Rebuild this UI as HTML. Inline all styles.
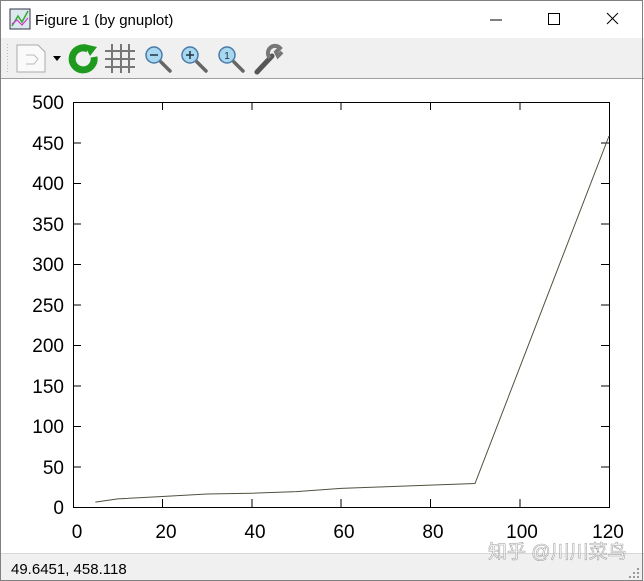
<!DOCTYPE html>
<html><head><style>
body{margin:0;width:644px;height:581px;overflow:hidden;background:#fff;font-family:"Liberation Sans","Noto Sans CJK SC",sans-serif;}
</style></head><body>
<svg width="644" height="581" xmlns="http://www.w3.org/2000/svg" style="display:block">
<rect x="0" y="0" width="644" height="581" fill="#fff"/>
<rect x="0" y="38" width="644" height="40" fill="#f0f0f0"/>
<line x1="0" y1="78.5" x2="644" y2="78.5" stroke="#a0a0a0"/>
<rect x="0" y="553" width="644" height="28" fill="#f0f0f0"/>
<line x1="0" y1="553.5" x2="644" y2="553.5" stroke="#d8d8d8"/>
<rect x="0.5" y="0.5" width="642" height="580" fill="none" stroke="#808080"/>
<!-- title -->
<rect x="10" y="9" width="20" height="20" fill="#dde8ee" stroke="#334"/>
<path d="M12 26 L18 16 L22 22 L28 11" stroke="#3a3" fill="none" stroke-width="1.5"/>
<path d="M12 24 L17 20 L22 25 L28 18" stroke="#c3c" fill="none" stroke-width="1.2"/>
<text x="35" y="25" font-size="15" fill="#000">Figure 1 (by gnuplot)</text>
<line x1="490" y1="20" x2="502" y2="20" stroke="#000"/>
<rect x="548.5" y="13.5" width="11" height="11" fill="none" stroke="#000"/>
<path d="M607 13 L618 24 M618 13 L607 24" stroke="#000"/>
<!-- toolbar -->
<line x1="7.5" y1="44" x2="7.5" y2="72" stroke="#bbb" stroke-dasharray="1,2"/>
<path d="M17 45 H38 L45 52 V72 H17 Z" fill="#fafafa" stroke="#aaa"/>
<path d="M26 55 H34 L38 59 L34 64 H26" fill="none" stroke="#bbb"/>
<path d="M53 56 H61 L57 61 Z" fill="#000"/>
<path d="M94 57 A11 11 0 1 1 88 49" fill="none" stroke="#1e9a1e" stroke-width="7"/>
<path d="M84 44 L97 47 L90 56 Z" fill="#1e9a1e"/>
<g stroke="#777" stroke-width="2"><line x1="112" y1="44" x2="112" y2="73"/><line x1="121" y1="44" x2="121" y2="73"/><line x1="129" y1="44" x2="129" y2="73"/><line x1="105" y1="51" x2="135" y2="51"/><line x1="105" y1="59" x2="135" y2="59"/><line x1="105" y1="67" x2="135" y2="67"/></g>
<g stroke="#666" stroke-width="3.5" stroke-linecap="round"><line x1="161" y1="62" x2="170" y2="71"/><line x1="197" y1="62" x2="206" y2="71"/><line x1="234" y1="62" x2="243" y2="71"/></g>
<g fill="#a8d8f0" stroke="#4a7aa8" stroke-width="1.5"><circle cx="154" cy="55" r="8"/><circle cx="190" cy="55" r="8"/><circle cx="227" cy="55" r="8"/></g>
<g stroke="#234" stroke-width="1.5"><line x1="150" y1="55" x2="158" y2="55"/><line x1="186" y1="55" x2="194" y2="55"/><line x1="190" y1="51" x2="190" y2="59"/></g>
<text x="227" y="59" font-size="10" text-anchor="middle" fill="#234">1</text>
<path d="M257 72 L272 56" stroke="#555" stroke-width="5" stroke-linecap="round"/>
<path d="M270 58 A7 7 0 1 1 280 48 L276 52 L278 56 L282 52" fill="none" stroke="#777" stroke-width="4"/>
<!-- plot -->
<g stroke="#000" stroke-width="1" fill="none">
<rect x="73.5" y="102.5" width="536" height="405"/>
<path d="M73 143h8M73 183.5h8M73 224h8M73 264.5h8M73 305h8M73 345.5h8M73 386h8M73 426.5h8M73 467h8
M609 143h-8M609 183.5h-8M609 224h-8M609 264.5h-8M609 305h-8M609 345.5h-8M609 386h-8M609 426.5h-8M609 467h-8
M162.5 507v-8M252 507v-8M341 507v-8M430.5 507v-8M520 507v-8
M162.5 102v8M252 102v8M341 102v8M430.5 102v8M520 102v8"/>
</g>
<polyline fill="none" stroke="#505040" stroke-width="1" points="95.3,502.1 117.7,498.9 162.3,496.5 207,494 251.7,493.2 296.3,491.6 341,488.4 385.7,486.8 430.3,485.1 475,483.5 609,136"/>
<g font-size="19" fill="#000" text-anchor="end">
<text x="64" y="109">500</text><text x="64" y="150">450</text><text x="64" y="190">400</text><text x="64" y="231">350</text><text x="64" y="271">300</text><text x="64" y="312">250</text><text x="64" y="352">200</text><text x="64" y="393">150</text><text x="64" y="433">100</text><text x="64" y="474">50</text><text x="64" y="514">0</text>
</g>
<g font-size="19" fill="#000" text-anchor="middle">
<text x="77" y="538">0</text><text x="166" y="538">20</text><text x="255" y="538">40</text><text x="344" y="538">60</text><text x="433" y="538">80</text><text x="522" y="538">100</text><text x="608" y="538">120</text>
</g>
<text x="488" y="558" font-size="19" fill="#fff" stroke="#999" stroke-width="0.6" opacity="0.85">知乎 @川川菜鸟</text>
<text x="11" y="574" font-size="15" fill="#000">49.6451,  458.118</text>
<g fill="#999"><rect x="637" y="568" width="2" height="2"/><rect x="633" y="572" width="2" height="2"/><rect x="637" y="572" width="2" height="2"/><rect x="629" y="576" width="2" height="2"/><rect x="633" y="576" width="2" height="2"/><rect x="637" y="576" width="2" height="2"/></g>
</svg>
</body></html>
